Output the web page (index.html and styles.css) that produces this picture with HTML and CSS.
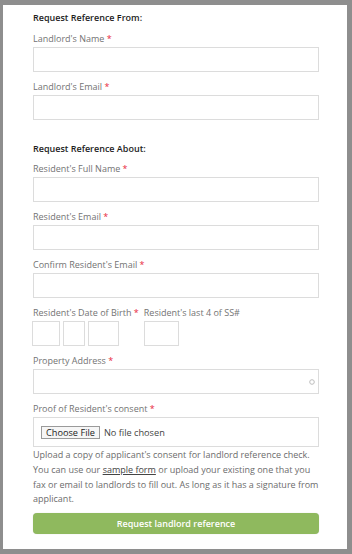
FILE: index.html
```
<!DOCTYPE html>
<html>
<head>
<meta charset="utf-8">
<link rel="stylesheet" href="styles.css">
</head>
<body>
<div class="card">
  <form class="form">
    <h3 class="heading">Request Reference From:</h3>
    <label class="label">Landlord's Name <span class="req">*</span></label>
    <div class="input"></div>
    <label class="label">Landlord's Email <span class="req">*</span></label>
    <div class="input"></div>

    <h3 class="heading section">Request Reference About:</h3>
    <label class="label">Resident's Full Name <span class="req">*</span></label>
    <div class="input"></div>
    <label class="label">Resident's Email <span class="req">*</span></label>
    <div class="input"></div>
    <label class="label">Confirm Resident's Email <span class="req">*</span></label>
    <div class="input"></div>

    <div class="row">
      <div class="col">
        <label class="label">Resident's Date of Birth <span class="req">*</span></label>
        <div class="boxes">
          <div class="box b1"></div>
          <div class="box b2"></div>
          <div class="box b3"></div>
        </div>
      </div>
      <div class="col">
        <label class="label">Resident's last 4 of SS#</label>
        <div class="boxes">
          <div class="box b4"></div>
        </div>
      </div>
    </div>

    <label class="label">Property Address <span class="req">*</span></label>
    <div class="input addr">
      <svg class="addr-icon" width="6" height="6" viewBox="0 0 6 6"><circle cx="3" cy="3" r="2.3" fill="none" stroke="#bdbdbd" stroke-width="1"/></svg>
    </div>

    <label class="label">Proof of Resident's consent <span class="req">*</span></label>
    <div class="file">
      <span class="file-btn">Choose File</span>
      <span class="file-name">No file chosen</span>
    </div>
    <p class="help">Upload a copy of applicant's consent for landlord reference check. You can use our <a class="link">sample form</a> or upload your existing one that you fax or email to landlords to fill out. As long as it has a signature from applicant.</p>

    <div class="submit">Request landlord reference</div>
  </form>
</div>
</body>
</html>
```
FILE: styles.css
```
html, body {
  margin: 0;
  padding: 0;
}
body {
  background: #8e8e8e;
  width: 352px;
  height: 554px;
  padding: 5px 5px 5px 3px;
  box-sizing: border-box;
  font-family: "Open Sans", "DejaVu Sans", sans-serif;
}
.card {
  background: #fff;
  height: 544px;
  box-sizing: border-box;
  padding: 5px 28px 0 30px;
}
.form {
  display: flex;
  flex-direction: column;
}
.heading {
  margin: 0 0 5px;
  font-size: 9px;
  line-height: 16px;
  font-weight: 600;
  color: #1d1d1d;
}
.heading.section {
  margin-top: 14px;
  margin-bottom: 4px;
}
.label {
  display: block;
  font-size: 9px;
  line-height: 16px;
  color: #737373;
}
.req {
  color: #e8283c;
}
.input {
  height: 25.4px;
  border: 1px solid #dcdcdc;
  box-sizing: border-box;
  margin-bottom: 6.6px;
}
.addr {
  position: relative;
}
.addr-icon {
  position: absolute;
  right: 3px;
  top: 9px;
}
.row {
  display: flex;
  gap: 5px;
  margin-bottom: 6.6px;
}
.col {
  display: flex;
  flex-direction: column;
}
.boxes {
  display: flex;
  gap: 3px;
}
.box {
  height: 25.4px;
  border: 1px solid #dcdcdc;
  box-sizing: border-box;
}
.b1 { width: 28px; margin-left: -1px; }
.b2 { width: 22px; }
.b3 { width: 31px; }
.b4 { width: 35px; }
.file {
  height: 30.4px;
  border: 1px solid #dcdcdc;
  box-sizing: border-box;
  display: flex;
  align-items: center;
  padding-left: 7px;
  gap: 4px;
}
.file-btn {
  font-size: 9.2px;
  color: #222;
  background: #f6f6f6;
  border: 1px solid #9a9a9a;
  padding: 0 4px;
  height: 13px;
  margin-top: 1px;
  box-sizing: border-box;
  display: flex;
  align-items: center;
}
.file-name {
  font-size: 9.2px;
  color: #444;
}
.help {
  margin: 0;
  font-size: 9px;
  line-height: 14.7px;
  color: #6c6c6c;
  padding-top: 1px;
}
.link {
  color: #444;
  text-decoration: underline;
}
.submit {
  margin-top: 6px;
  height: 20.6px;
  border-radius: 4px;
  background: #8fb95e;
  color: #fff;
  font-size: 9px;
  font-weight: 600;
  display: flex;
  align-items: center;
  justify-content: center;
  box-shadow: 0 0 1px rgba(0,0,0,0.2);
}
```
